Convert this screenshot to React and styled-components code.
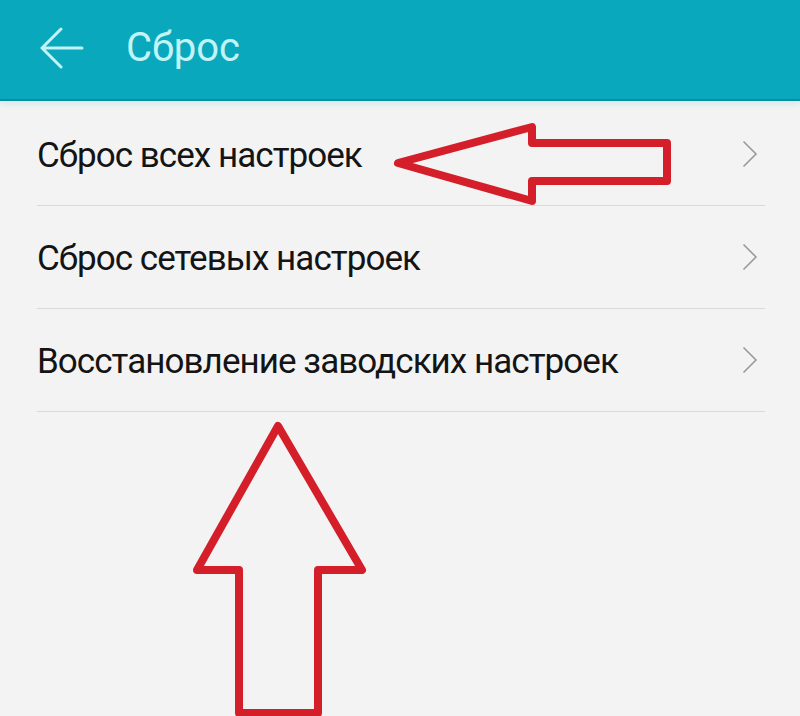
import React from 'react';
import styled, {createGlobalStyle} from 'styled-components';

const GlobalStyle = createGlobalStyle`
  html, body {
    margin: 0;
    padding: 0;
    background: #f3f3f3;
  }
  body {
    font-family: Roboto, "Noto Sans", "Liberation Sans", sans-serif;
  }
`;

const Screen = styled.div`
  position: relative;
  width: 800px;
  height: 716px;
  overflow: hidden;
  background: #f3f3f3;
`;

const Header = styled.header`
  display: flex;
  align-items: center;
  gap: 42px;
  height: 99px;
  padding-left: 40px;
  background: #0aa8bd;
  border-bottom: 2px solid #0a8d9c;
  box-shadow: 0 3px 6px rgba(10, 168, 189, 0.12);
`;

const BackButton = styled.button`
  display: flex;
  align-items: center;
  padding: 0;
  border: none;
  background: none;
  margin-top: -4px;
`;

const Title = styled.h1`
  margin: 0;
  margin-top: -4px;
  font-size: 40px;
  font-weight: 400;
  color: #c2f4f7;
`;

const List = styled.ul`
  list-style: none;
  margin: 0 35px 0 37px;
  padding: 2px 0 0;
`;

const Row = styled.li`
  display: flex;
  align-items: center;
  justify-content: space-between;
  height: 102px;
  padding-right: 7px;
  border-bottom: 1px solid #d9d9d9;
`;

const Label = styled.span`
  font-size: 35px;
  letter-spacing: -0.95px;
  color: #141414;
  margin-top: 3px;
`;

const Overlay = styled.svg`
  position: absolute;
  inset: 0;
  pointer-events: none;
`;

const BackArrow = () => (
    <svg width="44" height="42" viewBox="0 0 44 42" fill="none">
        <path d="M42 21H3M21 2L2 21l19 19" stroke="#c2f4f7" strokeWidth="3" strokeLinecap="round" strokeLinejoin="round"/>
    </svg>
);

const Chevron = () => (
    <svg width="16" height="28" viewBox="0 0 16 28" fill="none">
        <path d="M1.5 1.5L14 14 1.5 26.5" stroke="#9a9a9a" strokeWidth="1.6"/>
    </svg>
);

const items = [
    'Сброс всех настроек',
    'Сброс сетевых настроек',
    'Восстановление заводских настроек',
];

const App = () => {
    return (
        <Screen>
            <GlobalStyle/>
            <Header>
                <BackButton aria-label="back"><BackArrow/></BackButton>
                <Title>Сброс</Title>
            </Header>
            <List>
                {items.map(item => (
                    <Row key={item}>
                        <Label>{item}</Label>
                        <Chevron/>
                    </Row>
                ))}
            </List>
            {/* red callout arrows */}
            <Overlay width="800" height="716" viewBox="0 0 800 716">
                <path
                    d="M398 163L532 127V143H667V181H532V201Z"
                    fill="none" stroke="#d41f2a" strokeWidth="8" strokeLinejoin="round"/>
                <path
                    d="M278 426L362 570H318V713H239V570H197Z"
                    fill="none" stroke="#d41f2a" strokeWidth="8" strokeLinejoin="round"/>
            </Overlay>
        </Screen>
    );
};

export default App;
